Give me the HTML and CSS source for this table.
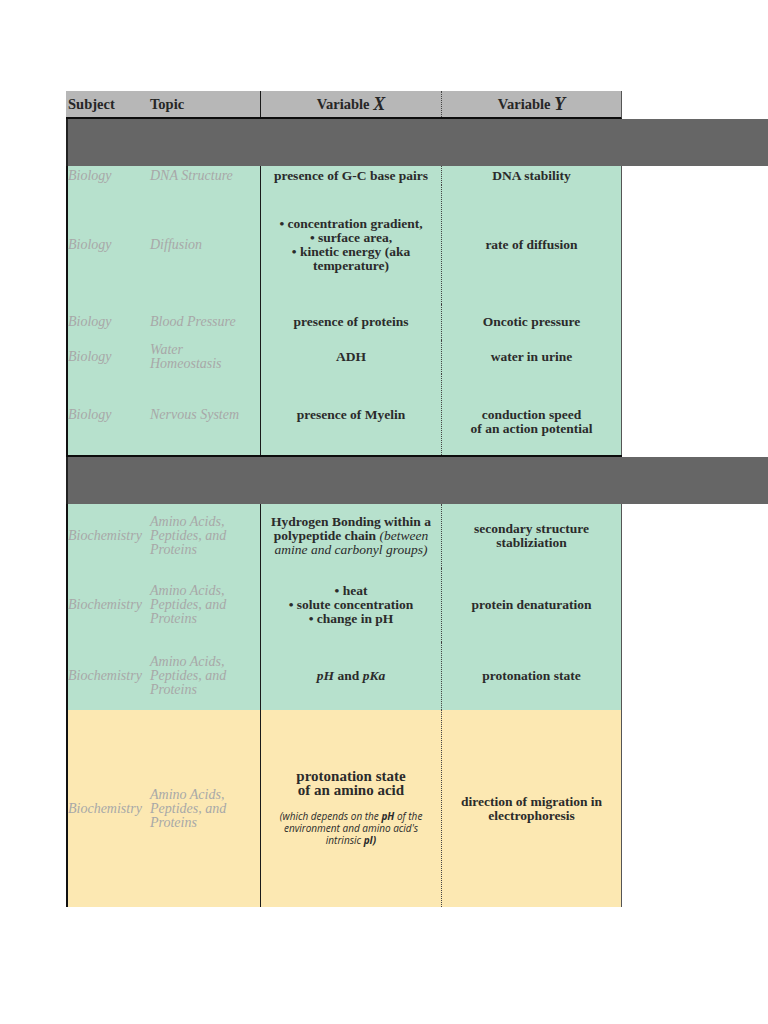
FILE: index.html
```html
<!DOCTYPE html>
<html>
<head>
<meta charset="utf-8">
<link rel="stylesheet" href="styles.css">
</head>
<body>
<div class="sheet">
  <div class="hdr">
    <div class="hc">Subject</div>
    <div class="hc">Topic</div>
    <div class="hc c3 ctr">Variable&nbsp;<span class="mvar">X</span></div>
    <div class="hc c4 ctr">Variable&nbsp;<span class="mvar">Y</span></div>
  </div>
  <div class="band"></div>
  <div class="group">
    <div class="row h19">
      <div class="cell subj"><div>Biology</div></div>
      <div class="cell topic"><div>DNA Structure</div></div>
      <div class="cell c3 main"><div>presence of G-C base pairs</div></div>
      <div class="cell c4 main"><div>DNA stability</div></div>
    </div>
    <div class="row h119">
      <div class="cell subj"><div>Biology</div></div>
      <div class="cell topic"><div>Diffusion</div></div>
      <div class="cell c3 main"><div>• concentration gradient,<br>• surface area,<br>• kinetic energy (aka<br>temperature)</div></div>
      <div class="cell c4 main"><div>rate of diffusion</div></div>
    </div>
    <div class="row h36">
      <div class="cell subj"><div>Biology</div></div>
      <div class="cell topic"><div>Blood Pressure</div></div>
      <div class="cell c3 main"><div>presence of proteins</div></div>
      <div class="cell c4 main"><div>Oncotic pressure</div></div>
    </div>
    <div class="row h34">
      <div class="cell subj"><div>Biology</div></div>
      <div class="cell topic"><div>Water<br>Homeostasis</div></div>
      <div class="cell c3 main"><div>ADH</div></div>
      <div class="cell c4 main"><div>water in urine</div></div>
    </div>
    <div class="row h81">
      <div class="cell subj"><div>Biology</div></div>
      <div class="cell topic"><div>Nervous System</div></div>
      <div class="cell c3 main"><div>presence of Myelin</div></div>
      <div class="cell c4 main shift"><div>conduction speed<br>of an action potential</div></div>
    </div>
  </div>
  <div class="band"></div>
  <div class="group last">
    <div class="row h64">
      <div class="cell subj"><div>Biochemistry</div></div>
      <div class="cell topic"><div>Amino Acids,<br>Peptides, and<br>Proteins</div></div>
      <div class="cell c3 main"><div>Hydrogen Bonding within a<br>polypeptide chain <span class="it">(between<br>amine and carbonyl groups)</span></div></div>
      <div class="cell c4 main"><div>secondary structure<br>stabliziation</div></div>
    </div>
    <div class="row h74">
      <div class="cell subj"><div>Biochemistry</div></div>
      <div class="cell topic"><div>Amino Acids,<br>Peptides, and<br>Proteins</div></div>
      <div class="cell c3 main"><div>• heat<br>• solute concentration<br>• change in pH</div></div>
      <div class="cell c4 main"><div>protein denaturation</div></div>
    </div>
    <div class="row h68">
      <div class="cell subj"><div>Biochemistry</div></div>
      <div class="cell topic"><div>Amino Acids,<br>Peptides, and<br>Proteins</div></div>
      <div class="cell c3 main"><div><span class="bi">pH</span> and <span class="bi">pKa</span></div></div>
      <div class="cell c4 main"><div>protonation state</div></div>
    </div>
    <div class="row h197 yellow">
      <div class="cell subj"><div>Biochemistry</div></div>
      <div class="cell topic"><div>Amino Acids,<br>Peptides, and<br>Proteins</div></div>
      <div class="cell c3 main">
        <div>
          <div class="big">protonation state<br>of an amino acid</div>
          <div class="note">(which depends on the <b>pH</b> of the<br>environment and amino acid's<br>intrinsic <b>pI)</b></div>
        </div>
      </div>
      <div class="cell c4 main"><div>direction of migration in<br>electrophoresis</div></div>
    </div>
  </div>
</div>
</body>
</html>
```

FILE: styles.css
```css
html, body {
  margin: 0;
  padding: 0;
  background: #ffffff;
}
.sheet {
  padding-top: 91px;
  padding-left: 66px;
  width: 768px;
  box-sizing: border-box;
  font-family: "Liberation Serif", "DejaVu Serif", serif;
  color: #2a2a2a;
}
.hdr {
  width: 556px;
  box-sizing: border-box;
  display: grid;
  grid-template-columns: 82px 112px 181px 180px;
  height: 28px;
  background: #b7b7b7;
  border-bottom: 2px solid #0c0c0c;
  border-right: 1px solid #555;
}
.hc {
  display: flex;
  align-items: center;
  font-weight: bold;
  font-size: 14.5px;
  padding-left: 2px;
  padding-top: 1px;
  color: #262626;
}
.hc.ctr {
  justify-content: center;
  padding-left: 0;
}
.hc.c3 { border-left: 1px solid #1a1a1a; }
.hc.c4 { border-left: 1px dotted #444; }
.mvar {
  font-style: italic;
  font-size: 18px;
}
.band {
  height: 47px;
  background: #666666;
  border-left: 2px solid #222;
}
.group {
  width: 556px;
  border-bottom: 2px solid #0c0c0c;
}
.group.last {
  border-bottom: none;
}
.row {
  box-sizing: border-box;
  width: 556px;
  display: grid;
  grid-template-columns: 80px 112px 181px 180px;
  background: #b7e1cd;
  border-left: 2px solid #111;
  border-right: 1px solid #555;
}
.row.yellow { background: #fce8b2; }
.h19 { height: 19px; }
.h119 { height: 119px; }
.h36 { height: 36px; }
.h34 { height: 34px; }
.h81 { height: 81px; }
.h64 { height: 64px; }
.h74 { height: 74px; }
.h68 { height: 68px; }
.h197 { height: 197px; }
.cell {
  display: flex;
  align-items: center;
  line-height: 14px;
  font-size: 13.5px;
  min-width: 0;
}
.subj, .topic {
  font-style: italic;
  color: #a8a8a8;
  white-space: nowrap;
  font-size: 14px;
}
.subj { padding-left: 0; }
.topic { padding-left: 2px; }
.c3 { border-left: 1px solid #1a1a1a; }
.c4 { border-left: 1px dotted #444; }
.main {
  justify-content: center;
  text-align: center;
  font-weight: bold;
  color: #2b2b2b;
  white-space: nowrap;
}
.main.shift { padding-top: 15px; }
.it { font-weight: normal; font-style: italic; }
.bi { font-style: italic; }
.big {
  font-size: 15px;
  line-height: 14px;
  margin-top: -3px;
}
.note {
  margin-top: 13px;
  font-family: "Open Sans", "Liberation Sans", sans-serif;
  font-style: italic;
  font-weight: normal;
  font-size: 10px;
  line-height: 12px;
}
.note b { font-weight: bold; }
```
